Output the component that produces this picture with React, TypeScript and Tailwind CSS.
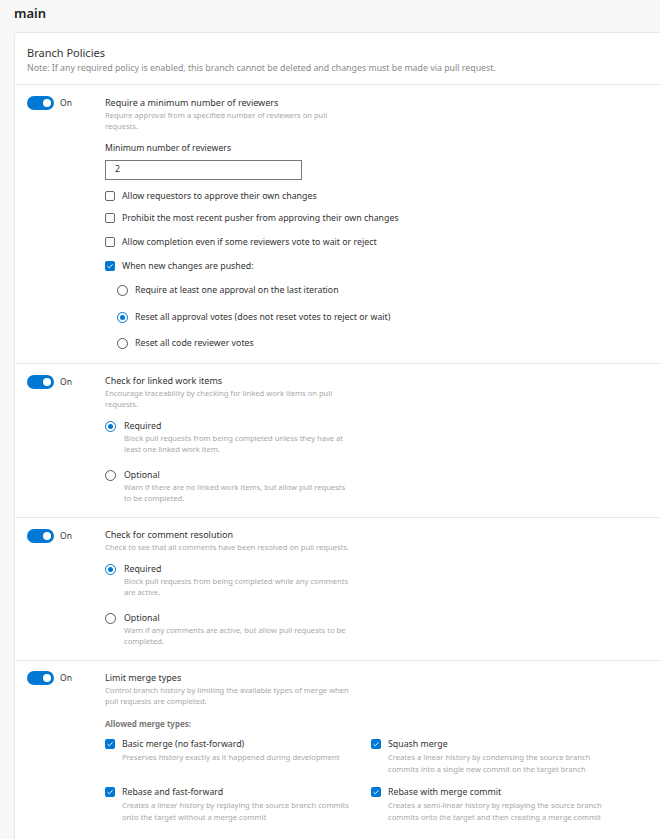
import React from "react";

const FONT = { fontFamily: '"Noto Sans", "Segoe UI", "Liberation Sans", sans-serif' };

function Toggle() {
  return (
    <div className="flex items-center w-[78px] shrink-0 h-[14px]">
      <div className="w-[27px] h-[14px] rounded-full bg-[#0078d4] relative">
        <div className="absolute right-[3px] top-[3px] w-[8px] h-[8px] rounded-full bg-white" />
      </div>
      <span className="ml-[6px] text-[8.5px] leading-[14px] text-[#333]">On</span>
    </div>
  );
}

function Checkbox({ checked }: { checked?: boolean }) {
  if (checked) {
    return (
      <div className="w-[10px] h-[10px] rounded-[2px] bg-[#0078d4] flex items-center justify-center shrink-0">
        <svg width="8" height="8" viewBox="0 0 8 8">
          <path d="M1.5 4.2 L3.2 5.8 L6.6 2.3" stroke="white" strokeWidth="0.9" fill="none" />
        </svg>
      </div>
    );
  }
  return <div className="w-[10px] h-[10px] rounded-[2px] border border-[#666] bg-white shrink-0" />;
}

function Radio({ checked }: { checked?: boolean }) {
  if (checked) {
    return (
      <div className="w-[11px] h-[11px] rounded-full border border-[#0078d4] flex items-center justify-center shrink-0">
        <div className="w-[5px] h-[5px] rounded-full bg-[#0078d4]" />
      </div>
    );
  }
  return <div className="w-[11px] h-[11px] rounded-full border border-[#555] shrink-0" />;
}

function CheckRow({ checked, label, mt }: { checked?: boolean; label: string; mt: string }) {
  return (
    <div className={`flex items-center h-[14px] ${mt}`}>
      <Checkbox checked={checked} />
      <span className="ml-[7px] text-[8.8px] leading-[14px] text-[#333] whitespace-nowrap">{label}</span>
    </div>
  );
}

function RadioRow({ checked, label, mt }: { checked?: boolean; label: string; mt: string }) {
  return (
    <div className={`flex items-center h-[14px] ml-[12px] ${mt}`}>
      <Radio checked={checked} />
      <span className="ml-[7px] text-[8.8px] leading-[14px] text-[#333] whitespace-nowrap">{label}</span>
    </div>
  );
}

function RadioDesc({ checked, label, desc, mt }: { checked?: boolean; label: string; desc: string; mt: string }) {
  return (
    <div className={`flex ${mt}`}>
      <div className="h-[14px] flex items-center">
        <Radio checked={checked} />
      </div>
      <div className="ml-[8px]">
        <div className="text-[8.8px] leading-[14px] text-[#333]">{label}</div>
        <div className="text-[7.6px] leading-[11px] text-[#a8a8a8] whitespace-pre-line">{desc}</div>
      </div>
    </div>
  );
}

function MergeItem({ label, desc }: { label: string; desc: string }) {
  return (
    <div className="flex">
      <div className="h-[14px] flex items-center">
        <Checkbox checked />
      </div>
      <div className="ml-[7px]">
        <div className="text-[8.8px] leading-[14px] text-[#333] whitespace-nowrap">{label}</div>
        <div className="text-[7.6px] leading-[12px] text-[#a8a8a8] whitespace-pre-line">{desc}</div>
      </div>
    </div>
  );
}

function SectionHead({ title, desc }: { title: string; desc: string }) {
  return (
    <>
      <div className="text-[9px] leading-[14px] text-[#333] whitespace-nowrap">{title}</div>
      <div className="text-[7.6px] leading-[11px] text-[#a8a8a8] whitespace-pre-line">{desc}</div>
    </>
  );
}

export default function App() {
  return (
    <div className="min-h-[839px] bg-[#f8f8f8] text-[#333]" style={FONT}>
      <div className="pl-[14px] pt-[3px] h-[32px]">
        <div className="text-[13px] leading-[20px] font-semibold text-[#222]">main</div>
      </div>
      <div className="ml-[14px] bg-white border border-[#e8e8e8] border-r-0 rounded-tl-[4px] rounded-bl-[4px]">
        <div className="px-[12px] pt-[12px] h-[52px] border-b border-[#e8e8e8]">
          <div className="text-[11px] leading-[16px] text-[#333]">Branch Policies</div>
          <div className="text-[8.8px] leading-[12px] text-[#8a8a8a] mt-[1px] whitespace-nowrap">
            Note: If any required policy is enabled, this branch cannot be deleted and changes must be made via pull request.
          </div>
        </div>

        {/* Section 1 */}
        <div className="flex pl-[12px] pt-[11px] pb-[13px] border-b border-[#e8e8e8]">
          <div className="pt-[0px]"><Toggle /></div>
          <div>
            <SectionHead
              title="Require a minimum number of reviewers"
              desc={"Require approval from a specified number of reviewers on pull\nrequests."}
            />
            <div className="mt-[9px] text-[8.7px] leading-[14px] text-[#333]">Minimum number of reviewers</div>
            <div className="mt-[5px] w-[197px] h-[20px] border border-[#777] flex items-center pl-[9px] text-[8.8px]">2</div>
            <CheckRow label="Allow requestors to approve their own changes" mt="mt-[9px]" />
            <CheckRow label="Prohibit the most recent pusher from approving their own changes" mt="mt-[8px]" />
            <CheckRow label="Allow completion even if some reviewers vote to wait or reject" mt="mt-[10px]" />
            <CheckRow checked label="When new changes are pushed:" mt="mt-[10px]" />
            <RadioRow label="Require at least one approval on the last iteration" mt="mt-[10px]" />
            <RadioRow checked label="Reset all approval votes (does not reset votes to reject or wait)" mt="mt-[13px]" />
            <RadioRow label="Reset all code reviewer votes" mt="mt-[12px]" />
          </div>
        </div>

        {/* Section 2 */}
        <div className="flex pl-[12px] pt-[10px] pb-[13px] border-b border-[#e8e8e8]">
          <div className="pt-[1px]"><Toggle /></div>
          <div>
            <SectionHead
              title="Check for linked work items"
              desc={"Encourage traceability by checking for linked work items on pull\nrequests."}
            />
            <RadioDesc
              checked
              label="Required"
              desc={"Block pull requests from being completed unless they have at\nleast one linked work item."}
              mt="mt-[9px]"
            />
            <RadioDesc
              label="Optional"
              desc={"Warn if there are no linked work items, but allow pull requests\nto be completed."}
              mt="mt-[13px]"
            />
          </div>
        </div>

        {/* Section 3 */}
        <div className="flex pl-[12px] pt-[10px] pb-[13px] border-b border-[#e8e8e8]">
          <div className="pt-[1px]"><Toggle /></div>
          <div>
            <SectionHead
              title="Check for comment resolution"
              desc="Check to see that all comments have been resolved on pull requests."
            />
            <RadioDesc
              checked
              label="Required"
              desc={"Block pull requests from being completed while any comments\nare active."}
              mt="mt-[9px]"
            />
            <RadioDesc
              label="Optional"
              desc={"Warn if any comments are active, but allow pull requests to be\ncompleted."}
              mt="mt-[13px]"
            />
          </div>
        </div>

        {/* Section 4 */}
        <div className="flex pl-[12px] pt-[10px] pb-[20px]">
          <div className="pt-[0px]"><Toggle /></div>
          <div className="flex-1">
            <SectionHead
              title="Limit merge types"
              desc={"Control branch history by limiting the available types of merge when\npull requests are completed."}
            />
            <div className="mt-[11px] text-[8px] leading-[12px] font-bold text-[#7a7a7a]">Allowed merge types:</div>
            <div className="mt-[7px] grid grid-cols-[266px_1fr] gap-y-[10px]">
              <MergeItem label="Basic merge (no fast-forward)" desc="Preserves history exactly as it happened during development" />
              <MergeItem label="Squash merge" desc={"Creates a linear history by condensing the source branch\ncommits into a single new commit on the target branch"} />
              <MergeItem label="Rebase and fast-forward" desc={"Creates a linear history by replaying the source branch commits\nonto the target without a merge commit"} />
              <MergeItem label="Rebase with merge commit" desc={"Creates a semi-linear history by replaying the source branch\ncommits onto the target and then creating a merge commit"} />
            </div>
          </div>
        </div>
      </div>
    </div>
  );
}
